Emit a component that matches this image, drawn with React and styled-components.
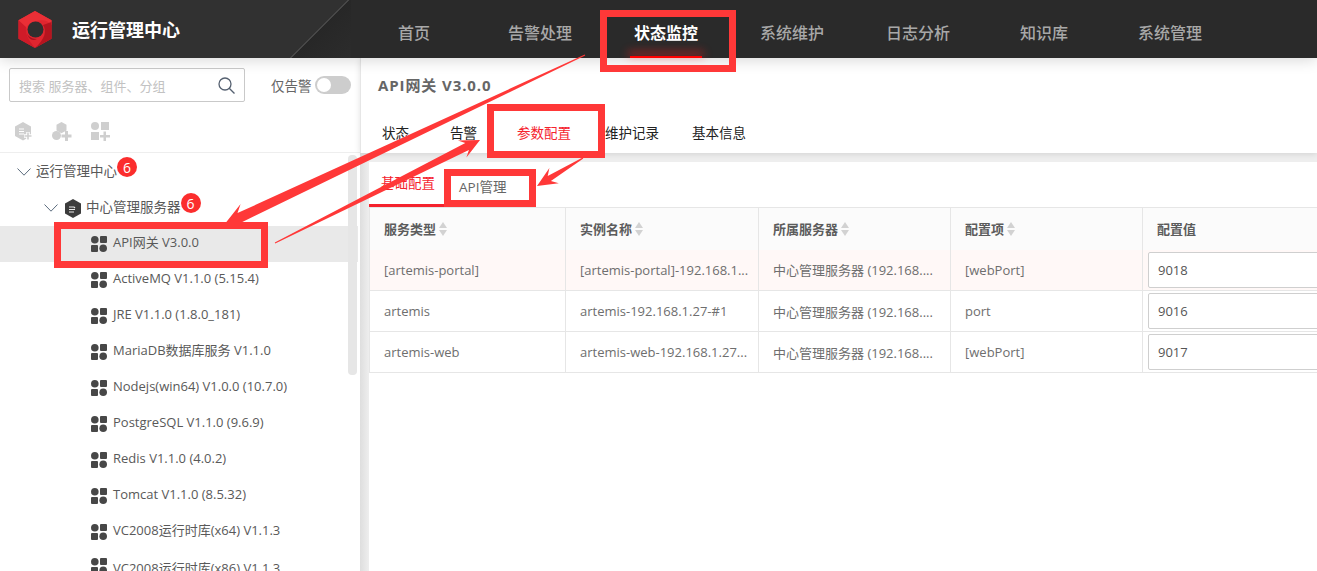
import React from 'react';
import styled, { createGlobalStyle } from 'styled-components';

const GlobalStyle = createGlobalStyle`
  html, body {
    margin: 0;
    height: 100%;
    overflow: hidden;
    background: #fff;
  }
  body {
    font-family: "Open Sans", "Noto Sans CJK SC", sans-serif;
    font-size: 13px;
    color: #666;
  }
  * {
    box-sizing: border-box;
  }
`;

const navItems = ['首页', '告警处理', '状态监控', '系统维护', '日志分析', '知识库', '系统管理'];

const treeLeaves = [
  'ActiveMQ V1.1.0 (5.15.4)',
  'JRE V1.1.0 (1.8.0_181)',
  'MariaDB数据库服务 V1.1.0',
  'Nodejs(win64) V1.0.0 (10.7.0)',
  'PostgreSQL V1.1.0 (9.6.9)',
  'Redis V1.1.0 (4.0.2)',
  'Tomcat V1.1.0 (8.5.32)',
  'VC2008运行时库(x64) V1.1.3',
];

const tabs = [
  { label: '状态', gap: 41 },
  { label: '告警', gap: 40 },
  { label: '参数配置', gap: 34, active: true },
  { label: '维护记录', gap: 33 },
  { label: '基本信息', gap: 0 },
];

const columns = [
  { label: '服务类型', width: 196, sort: true },
  { label: '实例名称', width: 193, sort: true },
  { label: '所属服务器', width: 192, sort: true },
  { label: '配置项', width: 192, sort: true },
  { label: '配置值', width: 300 },
];

const rows = [
  ['[artemis-portal]', '[artemis-portal]-192.168.1...', '中心管理服务器 (192.168....', '[webPort]', '9018'],
  ['artemis', 'artemis-192.168.1.27-#1', '中心管理服务器 (192.168....', 'port', '9016'],
  ['artemis-web', 'artemis-web-192.168.1.27...', '中心管理服务器 (192.168....', '[webPort]', '9017'],
];

// tapered annotation arrow: thin at the tail, full width at the head
const arrowPoints = (x1, y1, x2, y2, w, headW, headL) => {
  const len = Math.hypot(x2 - x1, y2 - y1);
  const ux = (x2 - x1) / len;
  const uy = (y2 - y1) / len;
  const nx = -uy;
  const ny = ux;
  const bx = x2 - ux * headL;
  const by = y2 - uy * headL;
  const neck = headL * 0.72;
  const cx = x2 - ux * neck;
  const cy = y2 - uy * neck;
  const pts = [
    [x1 + nx * 0.5, y1 + ny * 0.5],
    [cx + (nx * w) / 2, cy + (ny * w) / 2],
    [bx + (nx * headW) / 2, by + (ny * headW) / 2],
    [x2, y2],
    [bx - (nx * headW) / 2, by - (ny * headW) / 2],
    [cx - (nx * w) / 2, cy - (ny * w) / 2],
    [x1 - nx * 0.5, y1 - ny * 0.5],
  ];
  return pts.map((p) => p.map((n) => n.toFixed(1)).join(',')).join(' ');
};

const Logo = () => (
  <svg width="34" height="37" viewBox="0 0 34 37">
    <path d="M17 0 33.500 9.200V27.800L17 37 .5 27.800V9.200Z" fill="#e0252f" />
    <path d="M17 0 33.500 9.200V14C30 9 24 8 17 10.500 12 12 9 14 8 18L.5 9.200Z" fill="#ea2f36" />
    <path d="M.5 9.200 8 16C7 22 10 29 17 37L.5 27.800Z" fill="#cf1b28" />
    <path d="M25 14C29 20 27 28 17 37L33.500 27.800V11Z" fill="#b5141f" />
    <path d="M8 17C8 24 12 28 19 28 13 31 9 27 8 17Z" fill="#a81420" />
    <circle cx="17.500" cy="18.500" r="8" fill="#2f2f2f" />
  </svg>
);

const SearchIcon = () => (
  <svg width="17" height="17" viewBox="0 0 17 17" fill="none" stroke="#556070" strokeWidth="1.300">
    <circle cx="7" cy="7" r="6" />
    <path d="M11.200 11.200 16.500 16.500" />
  </svg>
);

const ServerAddIcon = () => (
  <svg width="18" height="19" viewBox="0 0 18 19">
    <path d="M8 0 16 4.500V14L8 18.500 0 14V4.500Z" fill="#cfcfcf" />
    <path d="M4 7h5M4 9.500h5M4 12h5" stroke="#fff" strokeWidth="1" />
    <path d="M13 10v8M9 14h8" stroke="#fff" strokeWidth="3.500" />
    <path d="M13 10.500v7M9.500 14h7" stroke="#cfcfcf" strokeWidth="1.600" />
  </svg>
);

const ClusterAddIcon = () => (
  <svg width="20" height="19" viewBox="0 0 20 19" fill="#cfcfcf">
    <path d="M9.500 0 14.500 2.800V8.500L9.500 11.300 4.500 8.500V2.800Z" />
    <circle cx="4.500" cy="13.500" r="4.500" />
    <path d="M13 9h3v3.500h3.500v3H16V19h-3v-3.500H9.500v-3H13Z" />
  </svg>
);

const GroupAddIcon = () => (
  <svg width="19" height="19" viewBox="0 0 19 19" fill="#cfcfcf">
    <circle cx="4" cy="4" r="4" />
    <rect x="10" y="0" width="8" height="8" />
    <rect x="0" y="10" width="8" height="8" />
    <path d="M12.500 9.500H15V13H19v2.500H15V19h-2.500V15.500H9V13h3.500Z" />
  </svg>
);

const Chevron = () => (
  <svg width="14" height="8" viewBox="0 0 14 8" fill="none" stroke="#5b6b7d" strokeWidth="1">
    <path d="M.5.5 7 7.200 13.500.5" />
  </svg>
);

const ServerIcon = () => (
  <svg width="16" height="19" viewBox="0 0 16 19">
    <path d="M8 0 16 4.500V14.500L8 19 0 14.500V4.500Z" fill="#3c3c3c" />
    <path d="M4 8h5l1 1M4 10.500h6M4 13h5" stroke="#e8e8e8" strokeWidth="1.200" fill="none" />
  </svg>
);

const GroupIcon = () => (
  <svg width="16" height="16" viewBox="0 0 16 16" fill="#474747">
    <circle cx="3.800" cy="3.800" r="3.800" />
    <rect x="9" y="0" width="7" height="7" rx="1" />
    <rect x="0" y="9" width="7" height="7" rx="1" />
    <circle cx="12.200" cy="12.200" r="3.800" />
  </svg>
);

const SortIcon = () => (
  <svg width="8" height="14" viewBox="0 0 8 14" fill="#d2d2d2">
    <path d="M4 0 8 6H0Z" />
    <path d="M4 14 0 8H8Z" />
  </svg>
);

const App = () => {
  return (
    <Page>
      <GlobalStyle />
      <Header>
        <Brand>
          <Logo />
          <BrandName>运行管理中心</BrandName>
        </Brand>
        <Nav>
          {navItems.map((item) => (
            <NavItem key={item} $active={item === '状态监控'}>
              {item}
            </NavItem>
          ))}
        </Nav>
      </Header>

      <Body>
        <Sidebar>
          <SearchRow>
            <SearchBox>
              <SearchPlaceholder>搜索 服务器、组件、分组</SearchPlaceholder>
              <SearchIcon />
            </SearchBox>
            <AlarmLabel>仅告警</AlarmLabel>
            <Switch />
          </SearchRow>
          <ToolRow>
            <ServerAddIcon />
            <ClusterAddIcon />
            <GroupAddIcon />
          </ToolRow>
          <Tree>
            <Scrollbar />
            <TreeRow $level={0}>
              <Chevron />
              <TreeText $branch>运行管理中心</TreeText>
              <Badge>6</Badge>
            </TreeRow>
            <TreeRow $level={1}>
              <Chevron />
              <ServerIcon />
              <TreeText $branch>中心管理服务器</TreeText>
              <Badge>6</Badge>
            </TreeRow>
            <TreeRow $level={2} $selected>
              <GroupIcon />
              <TreeText>API网关 V3.0.0</TreeText>
            </TreeRow>
            {treeLeaves.map((leaf) => (
              <TreeRow key={leaf} $level={2}>
                <GroupIcon />
                <TreeText>{leaf}</TreeText>
              </TreeRow>
            ))}
            <ClippedRow>
              <GroupIcon />
              <TreeText>VC2008运行时库(x86) V1.1.3</TreeText>
            </ClippedRow>
          </Tree>
        </Sidebar>

        <Main>
          <TitlePanel>
            <Title>API网关 V3.0.0</Title>
            <Tabs>
              {tabs.map((tab) => (
                <Tab key={tab.label} $gap={tab.gap} $active={tab.active}>
                  {tab.label}
                </Tab>
              ))}
            </Tabs>
          </TitlePanel>
          <Gutter>
            <ConfigPanel>
              <SubTabs>
                <SubTab $active>基础配置</SubTab>
                <SubTab>API管理</SubTab>
              </SubTabs>
              <Table>
                <colgroup>
                  {columns.map((col) => (
                    <col key={col.label} width={col.width} />
                  ))}
                </colgroup>
                <thead>
                  <tr>
                    {columns.map((col) => (
                      <Th key={col.label}>
                        <ThInner>
                          {col.label}
                          {col.sort && <SortIcon />}
                        </ThInner>
                      </Th>
                    ))}
                  </tr>
                </thead>
                <tbody>
                  {rows.map((row, i) => (
                    <Tr key={row[0]} $hot={i === 0}>
                      <Td>{row[0]}</Td>
                      <Td>{row[1]}</Td>
                      <Td>{row[2]}</Td>
                      <Td>{row[3]}</Td>
                      <InputCell>
                        <ValueInput defaultValue={row[4]} />
                      </InputCell>
                    </Tr>
                  ))}
                </tbody>
              </Table>
            </ConfigPanel>
          </Gutter>
        </Main>
      </Body>

      <Arrows width="1317" height="571" viewBox="0 0 1317 571">
        <polygon points={arrowPoints(585, 55, 224, 225, 10, 24, 24)} fill="#ff3838" />
        <polygon points={arrowPoints(275, 243, 480, 140, 8, 19, 20)} fill="#ff3838" />
        <polygon points={arrowPoints(583, 158, 537, 186, 6, 18, 20)} fill="#ff3838" />
      </Arrows>
      <Callout $x={600} $y={10} $w={136} $h={62} />
      <Callout $x={487} $y={104} $w={118} $h={54} />
      <Callout $x={444} $y={169} $w={92} $h={38} />
      <Callout $x={54} $y={222} $w={214} $h={46} />
    </Page>
  );
};

const Page = styled.div`
  position: relative;
  width: 1317px;
  height: 571px;
  overflow: hidden;
  display: flex;
  flex-direction: column;
`;

const Header = styled.header`
  position: relative;
  z-index: 2;
  flex: none;
  height: 58px;
  display: flex;
  background: #2a2a2a;
  box-shadow: 0 2px 14px rgba(0, 0, 0, 0.16);
`;

const Brand = styled.div`
  flex: none;
  width: 351px;
  display: flex;
  align-items: center;
  padding-left: 18px;
  gap: 20px;
  background: linear-gradient(
    135deg,
    #313131 0,
    #313131 246px,
    #474747 246px,
    #474747 247px,
    #272727 247px,
    #2c2c2c 100%
  );
`;

const BrandName = styled.div`
  font-size: 18px;
  font-weight: 700;
  color: #fff;
`;

const Nav = styled.nav`
  display: flex;
`;

const NavItem = styled.div`
  position: relative;
  width: 126px;
  padding-top: 21px;
  text-align: center;
  font-size: 16px;
  line-height: 24px;
  font-weight: ${(p) => (p.$active ? 700 : 500)};
  color: ${(p) => (p.$active ? '#fff' : '#a8a8a8')};

  ${(p) =>
    p.$active &&
    `
    &::after {
      content: '';
      position: absolute;
      left: 27px;
      right: 27px;
      bottom: 0;
      height: 2px;
      background: #f00;
      box-shadow: 0 -3px 8px 2px rgba(255, 30, 30, 0.45);
    }
  `}
`;

const Body = styled.div`
  flex: 1;
  min-height: 0;
  display: flex;
`;

const Sidebar = styled.aside`
  flex: none;
  width: 360px;
  display: flex;
  flex-direction: column;
  background: #fff;
`;

const SearchRow = styled.div`
  display: flex;
  align-items: center;
  height: 34px;
  margin-top: 10px;
  padding-left: 9px;
`;

const SearchBox = styled.div`
  width: 236px;
  height: 34px;
  display: flex;
  align-items: center;
  justify-content: space-between;
  padding: 0 9px 0 9px;
  border: 1px solid #c9c9c9;
  border-radius: 2px;
`;

const SearchPlaceholder = styled.span`
  font-size: 13px;
  color: #c2c2c2;
`;

const AlarmLabel = styled.span`
  margin-left: 26px;
  font-size: 13.500px;
  color: #666;
`;

const Switch = styled.div`
  position: relative;
  width: 36px;
  height: 18px;
  margin-left: 3px;
  border-radius: 9px;
  background: #cdcdcd;

  &::after {
    content: '';
    position: absolute;
    top: 2px;
    left: 2px;
    width: 14px;
    height: 14px;
    border-radius: 50%;
    background: #fff;
  }
`;

const ToolRow = styled.div`
  height: 51px;
  display: flex;
  align-items: flex-start;
  gap: 19px;
  padding: 20px 0 0 15px;
  border-bottom: 1px solid #eee;
`;

const Tree = styled.div`
  position: relative;
  flex: 1;
  min-height: 0;
  padding-top: 1px;
  overflow: hidden;
`;

const Scrollbar = styled.div`
  position: absolute;
  top: 2px;
  left: 348px;
  width: 9px;
  height: 220px;
  border-radius: 4px;
  background: #e6e6e6;
`;

const TreeRow = styled.div`
  height: 36px;
  width: 358px;
  display: flex;
  align-items: center;
  padding-left: ${(p) => [17, 44, 91][p.$level]}px;
  background: ${(p) => (p.$selected ? '#e9e9e9' : 'transparent')};

  & > svg + svg {
    margin-left: 7px;
  }
`;

// last row runs past the fold, the way it does in the real tree
const ClippedRow = styled(TreeRow).attrs({ $level: 2 })`
  align-items: flex-start;
  padding-top: 8px;
  height: 23px;
`;

const TreeText = styled.span`
  margin-left: ${(p) => (p.$branch ? 5 : 6)}px;
  padding-bottom: 5px;
  font-size: ${(p) => (p.$branch ? 13.5 : 13)}px;
  color: #595959;
  white-space: nowrap;
`;

const Badge = styled.span`
  width: 20px;
  height: 20px;
  margin: -10px 0 0 0;
  display: flex;
  align-items: center;
  justify-content: center;
  border-radius: 50%;
  background: #fb2d2d;
  color: #fff;
  font-size: 14px;
`;

const Main = styled.main`
  flex: 1;
  min-width: 0;
  display: flex;
  flex-direction: column;
  background: #fff;
`;

const TitlePanel = styled.div`
  position: relative;
  z-index: 1;
  flex: none;
  height: 95px;
  padding: 16px 0 0 17px;
  border-left: 1px solid #e6e6e6;
  background: #fff;
  box-shadow: 0 1px 6px rgba(0, 0, 0, 0.12);
`;

const Title = styled.div`
  font-size: 15px;
  line-height: 22px;
  font-weight: 700;
  letter-spacing: 0.9px;
  color: #666;
`;

const Tabs = styled.div`
  display: flex;
  margin: 27px 0 0 4px;
`;

const Tab = styled.div`
  margin-right: ${(p) => p.$gap}px;
  font-size: 13.500px;
  line-height: 20px;
  color: ${(p) => (p.$active ? '#f5222d' : '#222')};
`;

const Gutter = styled.div`
  flex: 1;
  min-height: 0;
  padding: 9px 0 0 9px;
  background: linear-gradient(90deg, #dedede 0, #eeeeee 9px);
`;

const ConfigPanel = styled.div`
  height: 100%;
  overflow: hidden;
  background: #fff;
`;

const SubTabs = styled.div`
  height: 45px;
  display: flex;
`;

const SubTab = styled.div`
  width: ${(p) => (p.$active ? 75 : 90)}px;
  padding: ${(p) => (p.$active ? '11px 0 0 12px' : '15px 0 0 15px')};
  font-size: 13.500px;
  line-height: 20px;
  color: ${(p) => (p.$active ? '#f5222d' : '#666')};
  border-bottom: 3px solid ${(p) => (p.$active ? '#f5222d' : 'transparent')};
  white-space: nowrap;
`;

const Table = styled.table`
  table-layout: fixed;
  width: 1073px;
  border-collapse: collapse;
  border-left: 1px solid #e6e6e6;
`;

const Th = styled.th`
  height: 42px;
  padding: 0 14px;
  background: #fbfbfb;
  border-top: 1px solid #e6e6e6;
  border-right: 1px solid #e6e6e6;
  text-align: left;
  font-size: 13px;
  font-weight: 700;
  color: #5c5c5c;
`;

const ThInner = styled.div`
  display: flex;
  align-items: center;
  gap: 3px;
`;

const Tr = styled.tr`
  background: ${(p) => (p.$hot ? '#fff8f7' : '#fff')};
`;

const Td = styled.td`
  height: 41px;
  padding: 0 14px;
  border-right: 1px solid #e6e6e6;
  border-bottom: 1px solid #e6e6e6;
  font-size: 13px;
  color: #6e6e6e;
  white-space: nowrap;
  overflow: hidden;
`;

const InputCell = styled(Td)`
  padding: 0 5px;
`;

const ValueInput = styled.input`
  display: block;
  width: 200px;
  height: 36px;
  padding: 0 9px;
  border: 1px solid #cfcfcf;
  border-radius: 2px;
  font-family: inherit;
  font-size: 13px;
  color: #555;
  background: #fff;
`;

const Arrows = styled.svg`
  position: absolute;
  top: 0;
  left: 0;
  z-index: 5;
  pointer-events: none;
`;

const Callout = styled.div`
  position: absolute;
  z-index: 6;
  left: ${(p) => p.$x}px;
  top: ${(p) => p.$y}px;
  width: ${(p) => p.$w}px;
  height: ${(p) => p.$h}px;
  border: 7px solid #ff3838;
  pointer-events: none;
`;

export default App;
